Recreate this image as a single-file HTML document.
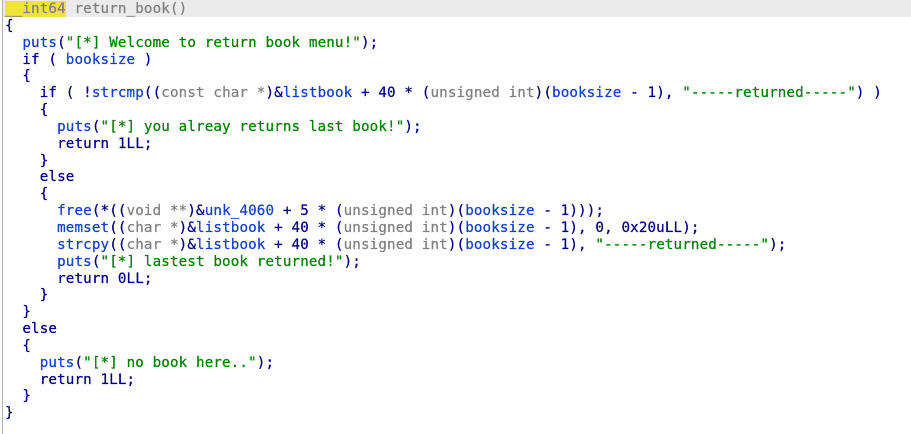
<!DOCTYPE html>
<html><head><meta charset="utf-8"><style>
html,body{margin:0;padding:0;background:#fff;width:911px;height:434px;overflow:hidden}
.wrap{position:absolute;left:2px;top:0;bottom:0;border-left:1px solid #b0b0b0;width:909px}
.hdr{position:absolute;left:0;top:0;width:909px;height:17px;background:#ebebeb}
pre{position:absolute;left:2px;top:1px;margin:0;font-family:"DejaVu Sans Mono","Liberation Mono",monospace;font-size:14.2px;line-height:16.85px;color:#000080;letter-spacing:0.14px;-webkit-text-stroke:0.25px currentColor}
.i{color:#1440c8}.s{color:#008000}.g{color:#808080}.y{background:#f2e33a;color:#808080}.h{color:#808080}
</style></head><body>
<div class="wrap"><div class="hdr"></div>
<pre><span class="y">__int64</span><span class="h"> return_book()</span>
{
  <span class="i">puts</span>(<span class="s">"[*] Welcome to return book menu!"</span>);
  if ( <span class="i">booksize</span> )
  {
    if ( !<span class="i">strcmp</span>((<span class="g">const char *</span>)&amp;<span class="i">listbook</span> + 40 * (<span class="g">unsigned int</span>)(<span class="i">booksize</span> - 1), <span class="s">"-----returned-----"</span>) )
    {
      <span class="i">puts</span>(<span class="s">"[*] you alreay returns last book!"</span>);
      return 1LL;
    }
    else
    {
      <span class="i">free</span>(*((<span class="g">void **</span>)&amp;<span class="i">unk_4060</span> + 5 * (<span class="g">unsigned int</span>)(<span class="i">booksize</span> - 1)));
      <span class="i">memset</span>((<span class="g">char *</span>)&amp;<span class="i">listbook</span> + 40 * (<span class="g">unsigned int</span>)(<span class="i">booksize</span> - 1), 0, 0x20uLL);
      <span class="i">strcpy</span>((<span class="g">char *</span>)&amp;<span class="i">listbook</span> + 40 * (<span class="g">unsigned int</span>)(<span class="i">booksize</span> - 1), <span class="s">"-----returned-----"</span>);
      <span class="i">puts</span>(<span class="s">"[*] lastest book returned!"</span>);
      return 0LL;
    }
  }
  else
  {
    <span class="i">puts</span>(<span class="s">"[*] no book here.."</span>);
    return 1LL;
  }
}</pre></div>
</body></html>
